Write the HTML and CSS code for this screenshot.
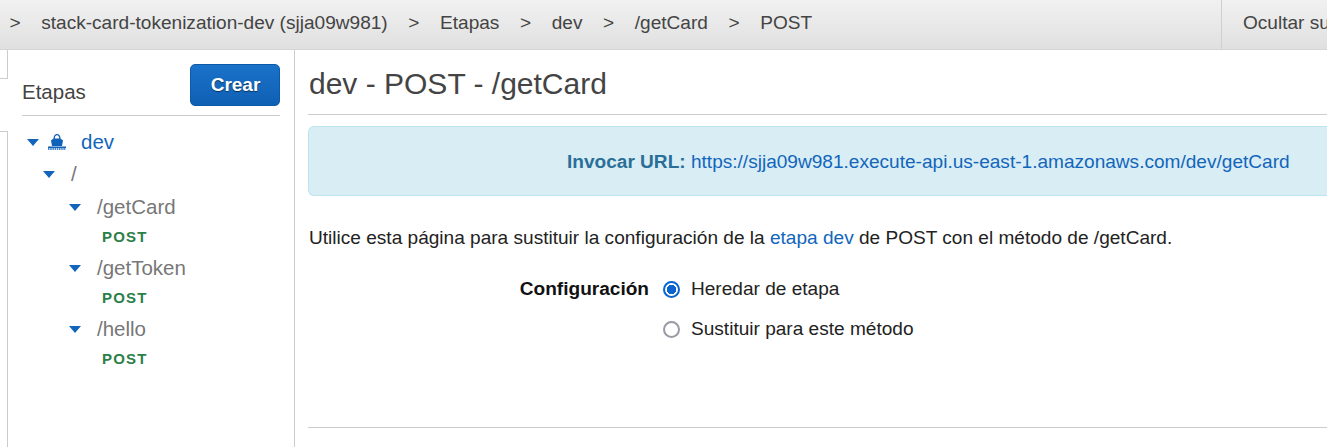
FILE: index.html

```html
<!DOCTYPE html>
<html lang="es">
<head>
  <meta charset="UTF-8">
  <title>dev - POST - /getCard</title>
  <link rel="stylesheet" href="styles.css">
</head>
<body>
  <header class="topbar">
    <nav class="crumbs">
      <span class="sep">&gt;</span>
      <span>stack-card-tokenization-dev (sjja09w981)</span>
      <span class="sep">&gt;</span>
      <span>Etapas</span>
      <span class="sep">&gt;</span>
      <span>dev</span>
      <span class="sep">&gt;</span>
      <span>/getCard</span>
      <span class="sep">&gt;</span>
      <span>POST</span>
    </nav>
    <div class="hide-link">Ocultar su</div>
  </header>
  <div class="layout">
    <div class="rail">
      <div class="rail-box rail-top"></div>
      <div class="rail-box rail-bottom"></div>
    </div>
    <aside class="sidebar">
      <div class="side-head">
        <h2>Etapas</h2>
        <button class="btn-create">Crear</button>
      </div>
      <ul class="tree">
        <li class="node level-0">
          <span class="caret"></span>
          <svg class="ship" viewBox="0 0 18 16" width="18" height="16">
            <path d="M5.500 4.500C5.500 1.500 7 0 9 0s3.500 1.500 3.500 4.500L15 6.500 14 12H4L3 6.500z" fill="#0f62b8"/>
            <path d="M6.800 4.500C6.800 2.500 7.800 1.300 9 1.300s2.200 1.200 2.200 3.200z" fill="#fff"/>
            <rect x="0" y="12.500" width="18" height="1.500" fill="#0f62b8"/>
            <path d="M0 15h18" stroke="#0f62b8" stroke-width="1.500" stroke-dasharray="1.500 .7"/>
          </svg>
          <a class="stage">dev</a>
        </li>
        <li class="node level-1"><span class="caret"></span><span class="path">/</span></li>
        <li class="node level-2"><span class="caret"></span><span class="path">/getCard</span></li>
        <li class="method">POST</li>
        <li class="node level-2"><span class="caret"></span><span class="path">/getToken</span></li>
        <li class="method">POST</li>
        <li class="node level-2"><span class="caret"></span><span class="path">/hello</span></li>
        <li class="method">POST</li>
      </ul>
    </aside>
    <main class="content">
      <h1>dev - POST - /getCard</h1>
      <div class="invoke">
        <strong>Invocar URL:</strong>
        <a>https://sjja09w981.execute-api.us-east-1.amazonaws.com/dev/getCard</a>
      </div>
      <p class="intro">Utilice esta página para sustituir la configuración de la <a>etapa dev</a> de POST con el método de /getCard.</p>
      <div class="settings">
        <div class="settings-label">Configuración</div>
        <div class="options">
          <label class="option"><input type="radio" name="conf" checked> Heredar de etapa</label>
          <label class="option"><input type="radio" name="conf"> Sustituir para este método</label>
        </div>
      </div>
      <div class="bottom-rule"></div>
    </main>
  </div>
</body>
</html>
```

FILE: styles.css

```css
body {
  margin: 0;
  height: 447px;
  overflow: hidden;
  background: #fff;
  font-family: "Liberation Sans", Arial, sans-serif;
  font-size: 19.07px;
  color: #222;
}
a {
  color: #1166bb;
}
.topbar {
  display: flex;
  justify-content: space-between;
  height: 49px;
  background: linear-gradient(#f1f1f1, #e0e0e0);
  border-bottom: 1px solid #d4d4d4;
  color: #444;
}
.crumbs {
  display: flex;
  align-items: center;
  gap: 20.600px;
  padding-left: 9.500px;
  padding-bottom: 3px;
}
.hide-link {
  flex: none;
  width: 84px;
  padding: 12px 0 0 21px;
  border-left: 1px solid #cfcfcf;
  white-space: nowrap;
}
.layout {
  display: flex;
  height: 397px;
}
.rail {
  flex: none;
  width: 8px;
}
.rail-box {
  border-right: 1px solid #ccc;
  box-sizing: border-box;
}
.rail-top {
  height: 29px;
  border-bottom: 1px solid #ccc;
}
.rail-bottom {
  height: 316px;
  margin-top: 52px;
  border-top: 1px solid #ccc;
}
.sidebar {
  flex: none;
  width: 258px;
  margin-left: 14px;
  padding-right: 14px;
  border-right: 1px solid #ccc;
}
.side-head {
  display: flex;
  justify-content: space-between;
  align-items: flex-start;
  height: 51px;
  margin-top: 14px;
  border-bottom: 1px solid #ccc;
}
.side-head h2 {
  margin: 16px 0 0;
  font-size: 20.500px;
  font-weight: normal;
  color: #444;
}
.btn-create {
  width: 90px;
  height: 42px;
  padding: 0 0 1px 1px;
  border: 1px solid #0c5aa8;
  border-radius: 5px;
  background: linear-gradient(#1a72c9, #0f60b4);
  color: #fff;
  font: bold 19px "Liberation Sans", Arial, sans-serif;
  text-shadow: 0 1px 1px rgba(0,0,0,0.5);
}
.tree {
  list-style: none;
  margin: 0;
  padding: 0;
  font-size: 20.500px;
  color: #777;
}
.node {
  display: flex;
  align-items: center;
}
.caret {
  width: 0;
  height: 0;
  border-left: 6px solid transparent;
  border-right: 6px solid transparent;
  border-top: 7px solid #1166bb;
}
.level-0 {
  height: 32px;
  margin-top: 10px;
  padding-left: 5px;
}
.ship {
  margin-left: 9px;
}
.stage {
  margin-left: 15px;
}
.level-1 {
  height: 32px;
  padding-left: 21px;
}
.level-1 .path {
  margin-left: 16px;
}
.level-2 {
  height: 34px;
  padding-left: 47px;
}
.level-2 .path {
  margin-left: 16px;
}
.method {
  height: 24px;
  line-height: 24px;
  margin: 1px 0 2px;
  padding-left: 80px;
  color: #2a8048;
  font-size: 15px;
  font-weight: bold;
  letter-spacing: 1.200px;
}
.content {
  flex: 1;
  min-width: 0;
  padding-left: 13px;
}
h1 {
  margin: 0;
  height: 64px;
  padding-left: 1px;
  line-height: 68px;
  font-size: 30px;
  font-weight: normal;
  color: #444;
  border-bottom: 1px solid #ccc;
}
.invoke {
  height: 68px;
  line-height: 70px;
  margin-top: 11px;
  padding-left: 258px;
  background: #d9edf5;
  border: 1px solid #bce5ef;
  border-right: none;
  border-radius: 6px 0 0 6px;
  white-space: nowrap;
}
.invoke strong {
  color: #2a6f97;
}
.intro {
  margin: 32px 0 0;
  padding-left: 1px;
  line-height: 20px;
}
.settings {
  display: flex;
  margin-top: 21px;
}
.settings-label {
  width: 341px;
  text-align: right;
  font-weight: bold;
  line-height: 40px;
  color: #111;
}
.options {
  margin-left: 14px;
}
.option {
  display: flex;
  align-items: center;
  gap: 11px;
  height: 40px;
}
.option input {
  appearance: none;
  box-sizing: border-box;
  width: 17px;
  height: 17px;
  margin: 0;
  border: 2px solid #9a9aa5;
  border-radius: 50%;
  background: #fff;
}
.option input:checked {
  border-color: #0b63ce;
  background: radial-gradient(circle, #0b63ce 0 4.500px, #fff 5px);
}
.bottom-rule {
  margin-top: 78px;
  border-top: 1px solid #ccc;
}
```
